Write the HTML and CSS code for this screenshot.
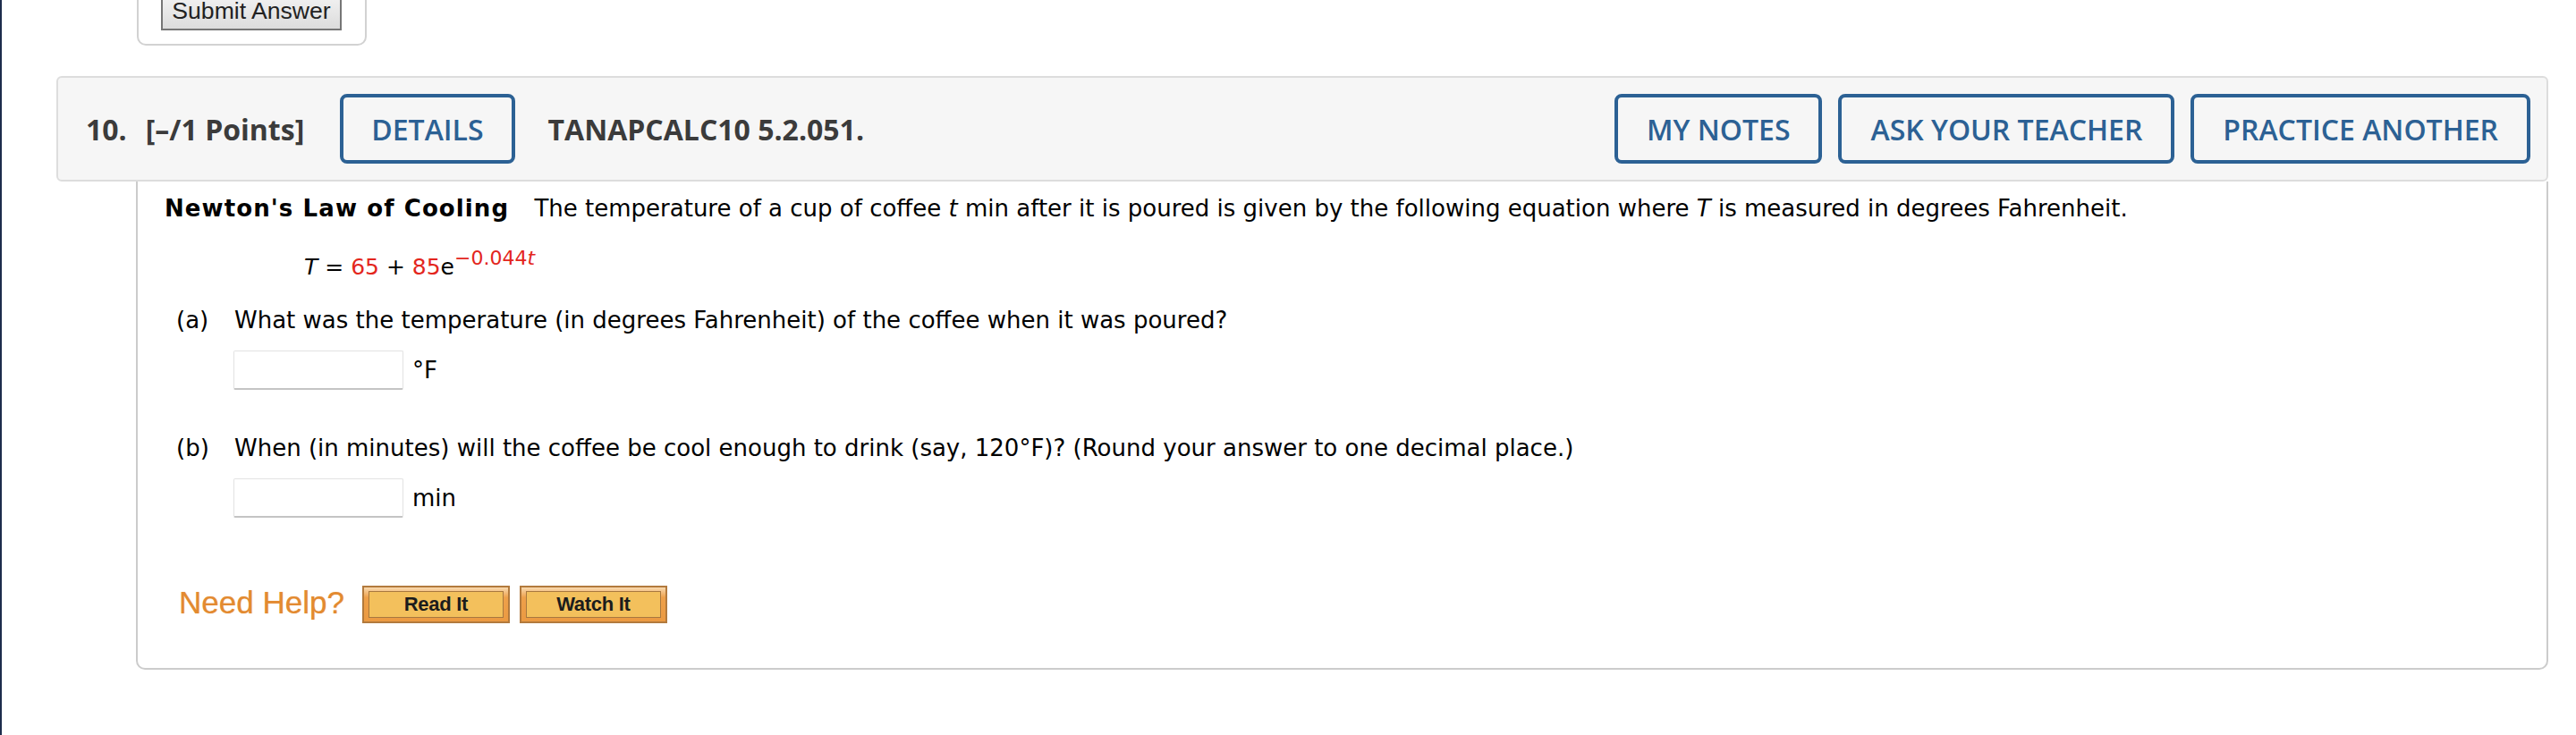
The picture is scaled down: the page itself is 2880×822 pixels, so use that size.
FILE: index.html
```html
<!DOCTYPE html>
<html lang="en">
<head>
<meta charset="utf-8">
<title>Question 10</title>
<link rel="stylesheet" href="styles.css">
</head>
<body>
<div class="page">
  <div class="submit-box">
    <button class="submit-btn" type="button">Submit Answer</button>
  </div>

  <div class="question">
    <div class="q-header">
      <span class="q-num">10.</span>
      <span class="q-points">[–/1 Points]</span>
      <button class="hbtn details" type="button">DETAILS</button>
      <span class="q-code">TANAPCALC10 5.2.051.</span>
      <div class="hbtn-group">
        <button class="hbtn" type="button">MY NOTES</button>
        <button class="hbtn" type="button">ASK YOUR TEACHER</button>
        <button class="hbtn" type="button">PRACTICE ANOTHER</button>
      </div>
    </div>

    <div class="q-body">
      <p class="intro"><b class="title">Newton's Law of Cooling</b> The temperature of a cup of coffee <i>t</i> min after it is poured is given by the following equation where <i>T</i> is measured in degrees Fahrenheit.</p>

      <p class="equation"><i>T</i> = <span class="red">65</span> + <span class="red">85</span>e<sup class="red">−0.044<i>t</i></sup></p>

      <div class="part">
        <p class="part-q"><span class="part-label">(a)</span>What was the temperature (in degrees Fahrenheit) of the coffee when it was poured?</p>
        <div class="answer"><input class="ans-input" type="text"><span class="unit">°F</span></div>
      </div>

      <div class="part part-b">
        <p class="part-q"><span class="part-label">(b)</span>When (in minutes) will the coffee be cool enough to drink (say, 120°F)? (Round your answer to one decimal place.)</p>
        <div class="answer"><input class="ans-input" type="text"><span class="unit">min</span></div>
      </div>

      <div class="help">
        <span class="help-label">Need Help?</span>
        <button class="help-btn" type="button"><span class="help-inner">Read It</span></button>
        <button class="help-btn" type="button"><span class="help-inner">Watch It</span></button>
      </div>
    </div>
  </div>
</div>
</body>
</html>
```

FILE: styles.css
```css
html, body {
  margin: 0;
  padding: 0;
  background: #ffffff;
}

.page {
  border-left: 2px solid #1d2c4c;
  min-height: 822px;
  box-sizing: border-box;
  overflow: hidden;
}

/* previous question's submit box (cut off at top) */
.submit-box {
  margin-top: -30px;
  margin-left: 151px;
  width: 257px;
  box-sizing: border-box;
  border: 2px solid #d2d2d2;
  border-radius: 0 0 10px 10px;
  padding: 18px 25px 15px;
}

.submit-btn {
  display: block;
  width: 202px;
  height: 44px;
  padding: 0;
  white-space: nowrap;
  font-family: "Liberation Sans", Arial, sans-serif;
  font-size: 26.6px;
  line-height: 40px;
  color: #222;
  background: linear-gradient(#f4f4f4, #dcdcdc);
  border: 2px solid #767676;
  border-radius: 0;
}

.question {
  margin-top: 34px;
}

/* header bar */
.q-header {
  display: flex;
  align-items: center;
  margin-left: 61px;
  margin-right: 31px;
  height: 118px;
  box-sizing: border-box;
  padding: 0 18px 0 31px;
  background: #f6f6f6;
  border: 2px solid #dddddd;
  border-radius: 6px;
  font-family: "Open Sans", "Liberation Sans", sans-serif;
  color: #3b3b3b;
  position: relative;
  z-index: 1;
}

.q-num {
  font-size: 32px;
  font-weight: 700;
}

.q-points {
  font-size: 32px;
  font-weight: 700;
  margin-left: 21px;
}

.q-code {
  font-size: 32px;
  font-weight: 700;
  margin-left: 37px;
}

.hbtn {
  height: 78px;
  box-sizing: border-box;
  padding: 0 32px;
  background: transparent;
  border: 4px solid #2c6194;
  border-radius: 8px;
  color: #2c6194;
  font-family: "Open Sans", "Liberation Sans", sans-serif;
  font-size: 32px;
  font-weight: 600;
  letter-spacing: 0;
  white-space: nowrap;
}

.details {
  margin-left: 40px;
  padding: 0 31px;
}

.hbtn-group {
  margin-left: auto;
  display: flex;
  gap: 18px;
}

/* question body */
.q-body {
  margin-left: 150px;
  margin-right: 31px;
  border: 2px solid #cccccc;
  border-top: none;
  border-radius: 0 0 10px 10px;
  padding: 12px 30px 50px 30px;
  font-family: "DejaVu Sans", Verdana, sans-serif;
  font-size: 26px;
  line-height: 36px;
  color: #000;
}

.q-body p {
  margin: 0;
}

.title {
  letter-spacing: 1.1px;
  margin-right: 20px;
}

.equation {
  margin-top: 30px !important;
  margin-left: 156px !important;
  font-size: 25px;
}

.equation sup {
  font-size: 22px;
  line-height: 0;
  vertical-align: 11px;
}

.red {
  color: #e3261d;
}

.part {
  margin-top: 23px;
  margin-left: 13px;
}

.part-b {
  margin-top: 47px;
}

.part-label {
  display: inline-block;
  width: 65px;
}

.answer {
  display: flex;
  align-items: center;
  margin-top: 16px;
  margin-left: 64px;
  height: 44px;
}

.ans-input {
  width: 190px;
  height: 44px;
  box-sizing: border-box;
  margin: 0;
  border: 1px solid #e2e2e2;
  border-bottom: 2px solid #c4c4c4;
  background: #fff;
  border-radius: 2px;
}

.unit {
  margin-left: 10px;
}

/* need help row */
.help {
  display: flex;
  align-items: center;
  gap: 11px;
  margin-top: 76px;
  margin-left: 16px;
  height: 42px;
}

.help-label {
  font-family: "Liberation Sans", Arial, sans-serif;
  font-size: 35px;
  color: #e38a30;
  margin-right: 9px;
  margin-top: -4px;
  text-shadow: 0 0 1px rgba(227, 138, 48, 0.6);
}

.help-btn {
  width: 165px;
  height: 42px;
  box-sizing: border-box;
  padding: 4px 5px;
  margin: 0;
  border: 2px solid #b27a3d;
  border-radius: 0;
  background: linear-gradient(#f9d9ae 0%, #eea04a 30%, #eb9a42 100%);
  display: flex;
}

.help-inner {
  flex: 1;
  display: flex;
  align-items: center;
  justify-content: center;
  border: 1px solid #a8783f;
  background: #f3c05c;
  font-family: "Liberation Sans", Arial, sans-serif;
  font-weight: 700;
  font-size: 22px;
  color: #1c1c1c;
  letter-spacing: -0.3px;
}
```
